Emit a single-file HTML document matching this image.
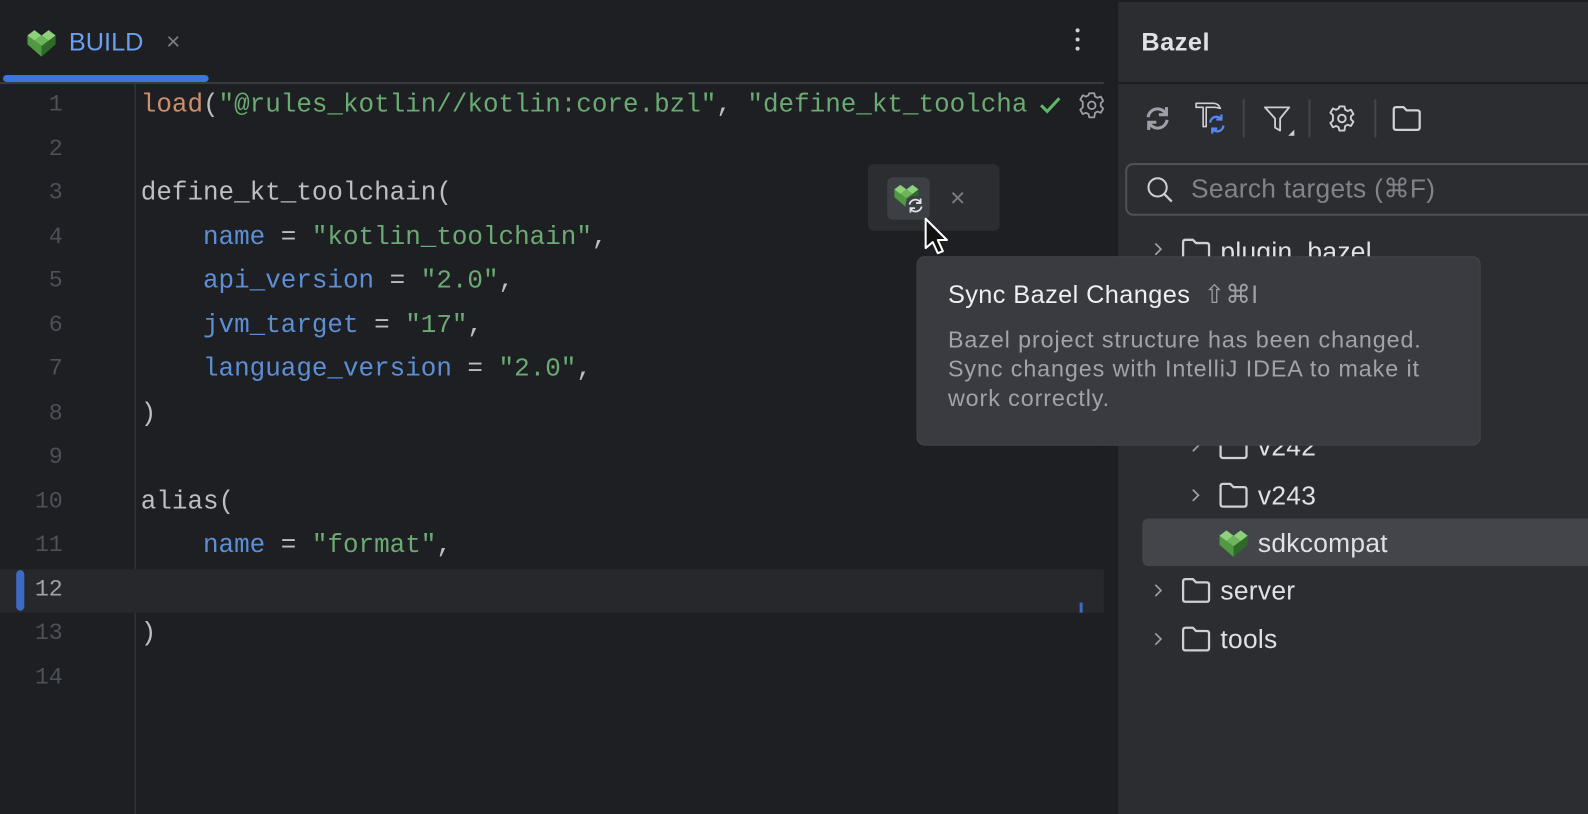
<!DOCTYPE html>
<html><head><meta charset="utf-8"><style>
*{margin:0;padding:0;box-sizing:border-box}
body{width:1588px;height:804px;overflow:hidden;background:#1e1f22;font-family:"Liberation Sans",sans-serif;position:relative}
#w{position:absolute;left:0;top:0;width:1568px;height:794px;transform:scale(1.01276);transform-origin:0 0}
.abs{position:absolute}
.code{font-family:"Liberation Mono",monospace;font-size:25.6px;color:#bcbec4;white-space:pre;line-height:43.5px}
.ln{font-family:"Liberation Mono",monospace;font-size:23px;color:#4b5059;width:62px;text-align:right;line-height:43.5px}
.o{color:#cf8e6d}.s{color:#6aab73}.k{color:#5c8fd6}
.tree{font-size:26px;letter-spacing:0.3px;color:#dfe1e5;line-height:30px}
</style></head><body><div id="w">
<svg width="0" height="0" style="position:absolute"><defs>
<g id="heart">
<polygon points="0,4 4,1 8,4 4,7" fill="#8fd07c"/>
<polygon points="8,4 12,1 16,4 12,7" fill="#8fd07c"/>
<polygon points="4,7 8,4 12,7 8,10" fill="#6db55a"/>
<polygon points="0,4 4,7 8,10 8,16 0,9" fill="#4f9a40"/>
<polygon points="16,4 12,7 8,10 8,16 16,9" fill="#2f6b28"/>
</g>
<g id="folder"><path d="M2 4.5 Q2 3 3.5 3 H8 L10 5 H16.5 Q18 5 18 6.5 V15.5 Q18 17 16.5 17 H3.5 Q2 17 2 15.5 Z" fill="none" stroke="#ced0d6" stroke-width="1.4"/></g>
<g id="chev"><path d="M7 4 L12 9 L7 14" fill="none" stroke="#9da0a8" stroke-width="1.5"/></g>
</defs></svg>

<!-- tab bar -->
<svg class="abs" style="left:27px;top:28px" width="28" height="28" viewBox="0 0 16 16"><use href="#heart"/></svg>
<div class="abs" style="left:68px;top:28px;font-size:25px;color:#6b9ef0">BUILD</div>
<div class="abs" style="left:164px;top:28px;font-size:24px;color:#7a7e85">×</div>
<div class="abs" style="left:1062px;top:28px;width:4px;height:26px">
<div style="width:4px;height:4px;border-radius:2px;background:#ced0d6;margin-bottom:5px"></div>
<div style="width:4px;height:4px;border-radius:2px;background:#ced0d6;margin-bottom:5px"></div>
<div style="width:4px;height:4px;border-radius:2px;background:#ced0d6"></div></div>
<div class="abs" style="left:0;top:81px;width:1104px;height:2px;background:#393b40"></div>
<div class="abs" style="left:3px;top:74px;width:203px;height:7px;border-radius:4px;background:#3d74e0"></div>

<!-- gutter -->
<div class="abs" style="left:133px;top:83px;width:1px;height:721px;background:#393b40"></div>
<div class="abs" style="left:0;top:562px;width:1104px;height:43px;background:#26282c"></div>
<div class="abs" style="left:16px;top:563px;width:8px;height:40px;border-radius:4px;background:#3d6bc4"></div>
<div class="abs" style="left:1066px;top:595px;width:3px;height:10px;background:#3d6bc4"></div>
<div class="abs ln" style="left:0;top:82px">1<br>2<br>3<br>4<br>5<br>6<br>7<br>8<br>9<br>10<br>11<br><span style="color:#a1a3ab">12</span><br>13<br>14</div>

<div class="abs code" style="left:139px;top:82px"><span class="o">load</span>(<span class="s">"@rules_kotlin//kotlin:core.bzl"</span>, <span class="s">"define_kt_toolcha</span>

define_kt_toolchain(
    <span class="k">name</span> = <span class="s">"kotlin_toolchain"</span>,
    <span class="k">api_version</span> = <span class="s">"2.0"</span>,
    <span class="k">jvm_target</span> = <span class="s">"17"</span>,
    <span class="k">language_version</span> = <span class="s">"2.0"</span>,
)

alias(
    <span class="k">name</span> = <span class="s">"format"</span>,

)
</div>
<svg class="abs" style="left:1024px;top:90px" width="26" height="26" viewBox="0 0 26 26"><path d="M4 14 L10 20 L22 7" fill="none" stroke="#5fb865" stroke-width="3"/></svg>
<svg class="abs" style="left:1063px;top:89px" width="30" height="30" viewBox="0 0 24 24"><path d="M10 2.5h4l.6 2.6 2 1 2.5-1 2 3.4-2 1.8v2.4l2 1.8-2 3.4-2.5-1-2 1L14 21.5h-4l-.6-2.6-2-1-2.5 1-2-3.4 2-1.8V9.3l-2-1.8 2-3.4 2.5 1 2-1z" fill="none" stroke="#9da0a8" stroke-width="1.4" stroke-linejoin="round"/><circle cx="12" cy="12" r="3" fill="none" stroke="#9da0a8" stroke-width="1.4"/></svg>

<!-- floating sync popup -->
<div class="abs" style="left:857px;top:162px;width:130px;height:66px;border-radius:6px;background:#2b2d30"></div>
<div class="abs" style="left:876px;top:175px;width:42px;height:42px;border-radius:6px;background:#3c3f44"></div>
<svg class="abs" style="left:883px;top:181px" width="24" height="24" viewBox="0 0 16 16"><use href="#heart"/></svg>
<svg class="abs" style="left:893px;top:192px" width="22" height="22" viewBox="0 0 22 22"><circle cx="11" cy="11" r="10" fill="#3c3f44"/><path d="M5 10 A6 6 0 0 1 16 8 M17 12 A6 6 0 0 1 6 14" fill="none" stroke="#dfe1e5" stroke-width="1.8"/><path d="M16 4 V8.5 H11.5" fill="none" stroke="#dfe1e5" stroke-width="1.8"/><path d="M6 18 V13.5 H10.5" fill="none" stroke="#dfe1e5" stroke-width="1.8"/></svg>
<div class="abs" style="left:938px;top:180px;font-size:26px;color:#7a7e85">×</div>
<svg class="abs" style="left:912px;top:214px" width="28" height="40" viewBox="0 0 28 40"><path d="M2 2 V31 L9 25 L14 36 L19 34 L14 23 L23 23 Z" fill="#111" stroke="#fff" stroke-width="2" stroke-linejoin="round"/></svg>

<!-- right panel -->
<div class="abs" style="left:1104px;top:0;width:470px;height:804px;background:#2b2d30"></div>
<div class="abs" style="left:1090px;top:0;width:14px;height:804px;background:#1e1f22"></div>
<div class="abs" style="left:1090px;top:0;width:484px;height:2px;background:#1e1f22"></div>
<div class="abs" style="left:1127px;top:28px;font-size:25px;letter-spacing:0.5px;font-weight:bold;color:#dfe1e5">Bazel</div>
<div class="abs" style="left:1090px;top:81px;width:484px;height:2px;background:#1e1f22"></div>

<!-- toolbar -->
<svg class="abs" style="left:1128px;top:102px" width="30" height="30" viewBox="0 0 24 24"><path d="M4.5 11 A7.5 7.5 0 0 1 18 7.5 M19.5 13 A7.5 7.5 0 0 1 6 16.5" fill="none" stroke="#9da0a8" stroke-width="2.4"/><path d="M19 3 V9 H13" fill="none" stroke="#9da0a8" stroke-width="2.4"/><path d="M5 21 V15 H11" fill="none" stroke="#9da0a8" stroke-width="2.4"/></svg>
<svg class="abs" style="left:1178px;top:99px" width="36" height="36" viewBox="0 0 36 36"><path d="M3 3 H20 Q25 3 27 8 L22 7 H13 V26 H10 V7 H3 Z" fill="none" stroke="#ced0d6" stroke-width="1.6" stroke-linejoin="round"/><path d="M17 22 A6 6 0 0 1 28 19 M30 25 A6 6 0 0 1 19 28" fill="none" stroke="#548af7" stroke-width="2.2"/><path d="M28 14 V19 H23" fill="none" stroke="#548af7" stroke-width="2.2"/><path d="M19 33 V28 H24" fill="none" stroke="#548af7" stroke-width="2.2"/></svg>
<div class="abs" style="left:1227px;top:98px;width:2px;height:38px;background:#43454a"></div>
<svg class="abs" style="left:1246px;top:102px" width="34" height="34" viewBox="0 0 34 34"><path d="M3 4 H27 L18 15 V27 L13 24 V15 Z" fill="none" stroke="#ced0d6" stroke-width="1.8" stroke-linejoin="round"/><path d="M32 26 V32 H26 Z" fill="#ced0d6"/></svg>
<div class="abs" style="left:1292px;top:98px;width:2px;height:38px;background:#43454a"></div>
<svg class="abs" style="left:1310px;top:102px" width="30" height="30" viewBox="0 0 24 24"><path d="M10 2.5h4l.6 2.6 2 1 2.5-1 2 3.4-2 1.8v2.4l2 1.8-2 3.4-2.5-1-2 1L14 21.5h-4l-.6-2.6-2-1-2.5 1-2-3.4 2-1.8V9.3l-2-1.8 2-3.4 2.5 1 2-1z" fill="none" stroke="#ced0d6" stroke-width="1.5" stroke-linejoin="round"/><circle cx="12" cy="12" r="3" fill="none" stroke="#ced0d6" stroke-width="1.5"/></svg>
<div class="abs" style="left:1357px;top:98px;width:2px;height:38px;background:#43454a"></div>
<svg class="abs" style="left:1373px;top:101px" width="32" height="32" viewBox="0 0 20 20"><use href="#folder"/></svg>

<!-- search -->
<div class="abs" style="left:1111px;top:161px;width:490px;height:52px;border:2px solid #4e5157;border-radius:8px"></div>
<svg class="abs" style="left:1130px;top:172px" width="32" height="32" viewBox="0 0 32 32"><circle cx="13" cy="13" r="9" fill="none" stroke="#ced0d6" stroke-width="2"/><path d="M19.5 19.5 L27 27" stroke="#ced0d6" stroke-width="2.2"/></svg>
<div class="abs" style="left:1176px;top:171px;font-size:26px;letter-spacing:0.3px;color:#80838a">Search targets (⌘F)</div>

<!-- tree -->
<svg class="abs" style="left:1133px;top:236px" width="20" height="20" viewBox="0 0 18 18"><use href="#chev"/></svg>
<svg class="abs" style="left:1165px;top:232px" width="32" height="32" viewBox="0 0 20 20"><use href="#folder"/></svg>
<div class="abs tree" style="left:1205px;top:233px">plugin_bazel</div>

<svg class="abs" style="left:1170px;top:430px" width="20" height="20" viewBox="0 0 18 18"><use href="#chev"/></svg>
<svg class="abs" style="left:1202px;top:425px" width="32" height="32" viewBox="0 0 20 20"><use href="#folder"/></svg>
<div class="abs tree" style="left:1242px;top:426px">v242</div>
<svg class="abs" style="left:1170px;top:479px" width="20" height="20" viewBox="0 0 18 18"><use href="#chev"/></svg>
<svg class="abs" style="left:1202px;top:473px" width="32" height="32" viewBox="0 0 20 20"><use href="#folder"/></svg>
<div class="abs tree" style="left:1242px;top:474px">v243</div>
<div class="abs" style="left:1128px;top:512px;width:470px;height:47px;border-radius:6px;background:#43454a"></div>
<svg class="abs" style="left:1204px;top:522px" width="28" height="28" viewBox="0 0 16 16"><use href="#heart"/></svg>
<div class="abs tree" style="left:1242px;top:521px">sdkcompat</div>
<svg class="abs" style="left:1133px;top:573px" width="20" height="20" viewBox="0 0 18 18"><use href="#chev"/></svg>
<svg class="abs" style="left:1165px;top:567px" width="32" height="32" viewBox="0 0 20 20"><use href="#folder"/></svg>
<div class="abs tree" style="left:1205px;top:568px">server</div>
<svg class="abs" style="left:1133px;top:621px" width="20" height="20" viewBox="0 0 18 18"><use href="#chev"/></svg>
<svg class="abs" style="left:1165px;top:615px" width="32" height="32" viewBox="0 0 20 20"><use href="#folder"/></svg>
<div class="abs tree" style="left:1205px;top:616px">tools</div>

<!-- tooltip -->
<div class="abs" style="left:905px;top:253px;width:557px;height:187px;border-radius:8px;background:#393b40;border:1px solid #43454a"></div>
<div class="abs" style="left:936px;top:276px;font-size:25px;letter-spacing:0.4px;color:#eeeff1;white-space:nowrap">Sync Bazel Changes <span style="color:#9da0a8;margin-left:6px">⇧⌘I</span></div>
<div class="abs" style="left:936px;top:321px;font-size:23px;letter-spacing:0.9px;line-height:29px;color:#a0a3a9;width:540px;white-space:nowrap">Bazel project structure has been changed.<br>Sync changes with IntelliJ IDEA to make it<br>work correctly.</div>
</div></body></html>
